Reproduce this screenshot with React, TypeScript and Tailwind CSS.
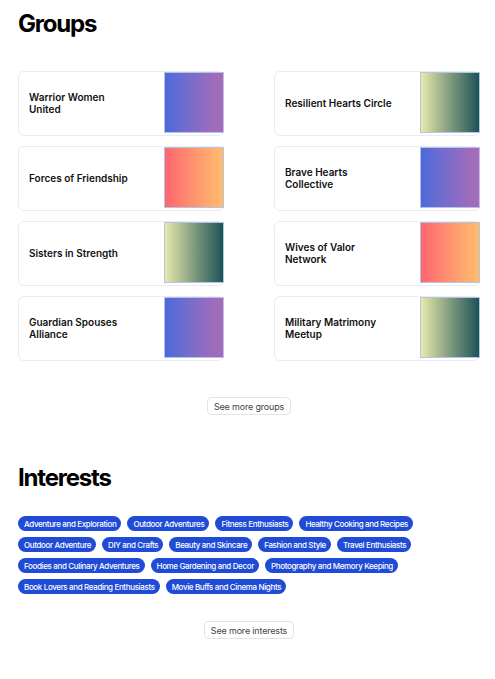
import React from 'react';

const gradients = {
  blue: 'bg-gradient-to-r from-[#4b69dc] to-[#aa6bb6]',
  green: 'bg-gradient-to-r from-[#e8eaa8] to-[#1b5356]',
  red: 'bg-gradient-to-r from-[#ff6470] to-[#ffbd6c]',
};

const groups: { name: string; tone: keyof typeof gradients }[] = [
  { name: 'Warrior Women United', tone: 'blue' },
  { name: 'Resilient Hearts Circle', tone: 'green' },
  { name: 'Forces of Friendship', tone: 'red' },
  { name: 'Brave Hearts Collective', tone: 'blue' },
  { name: 'Sisters in Strength', tone: 'green' },
  { name: 'Wives of Valor Network', tone: 'red' },
  { name: 'Guardian Spouses Alliance', tone: 'blue' },
  { name: 'Military Matrimony Meetup', tone: 'green' },
];

const interests = [
  'Adventure and Exploration',
  'Outdoor Adventures',
  'Fitness Enthusiasts',
  'Healthy Cooking and Recipes',
  'Outdoor Adventure',
  'DIY and Crafts',
  'Beauty and Skincare',
  'Fashion and Style',
  'Travel Enthusiasts',
  'Foodies and Culinary Adventures',
  'Home Gardening and Decor',
  'Photography and Memory Keeping',
  'Book Lovers and Reading Enthusiasts',
  'Movie Buffs and Cinema Nights',
];

const GroupCard = ({ name, tone }: { name: string; tone: keyof typeof gradients }) => (
  <div className="flex h-[65px] items-center justify-between rounded-md border border-[#ebebeb] bg-white pb-[2px]">
    <p className="w-[119px] pl-[10px] text-[10px] font-semibold leading-[12px] text-[#111]">
      {name}
    </p>
    <div className={`-mr-px h-[61px] w-[60px] border border-[#b4c3ea] ${gradients[tone]}`} />
  </div>
);

export default function App() {
  return (
    <div className="min-h-screen bg-white pl-[18px] pr-[15px] pt-2 font-['Inter',sans-serif]">
      {/* Groups */}
      <h2 className="text-2xl font-bold leading-8 tracking-[-0.05em] text-black">Groups</h2>
      <div className="mt-[31px] grid grid-cols-[206px_206px] justify-between gap-y-[10px]">
        {groups.map((g) => (
          <GroupCard key={g.name} name={g.name} tone={g.tone} />
        ))}
      </div>
      <div className="mt-9 flex justify-center">
        <button className="h-[18px] rounded border border-[#e2e4e8] bg-white px-[6px] text-[9px] leading-none tracking-[-0.02em] text-[#444]">
          See more groups
        </button>
      </div>

      {/* Interests */}
      <h2 className="mt-[47px] text-2xl font-bold leading-8 tracking-[-0.05em] text-black">Interests</h2>
      <div className="mt-[22px] flex flex-wrap gap-[6px]">
        {interests.map((i) => (
          <span
            key={i}
            className="flex h-[15px] items-center rounded-full bg-[#1f4bd6] pl-[6px] pr-[5px] text-[8px] font-medium leading-none tracking-[-0.045em] text-white"
          >
            {i}
          </span>
        ))}
      </div>
      <div className="mt-[27px] flex justify-center">
        <button className="h-[18px] rounded border border-[#e2e4e8] bg-white px-[6px] text-[9px] leading-none tracking-[-0.02em] text-[#444]">
          See more interests
        </button>
      </div>
    </div>
  );
}
